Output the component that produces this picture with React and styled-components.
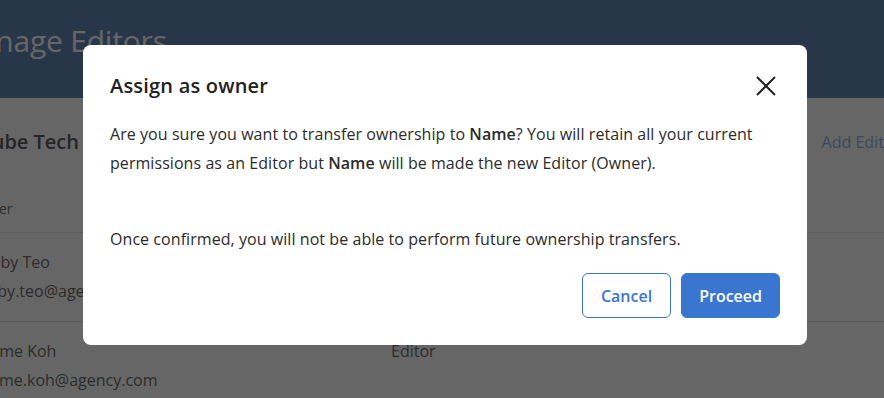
import React from 'react';
import styled, {createGlobalStyle} from 'styled-components';

const GlobalStyle = createGlobalStyle`
  html, body {
    margin: 0;
    height: 100%;
    overflow: hidden;
    background: #ffffff;
    font-family: "Open Sans", "DejaVu Sans", sans-serif;
  }
  #root {
    height: 100%;
  }
`

// the page behind the dialog (scrolled a little to the right)
const Page = styled.div`
  margin-left: -48px;
  width: calc(100% + 96px);
  height: 100%;
`

const PageHeader = styled.header`
  height: 98px;
  box-sizing: border-box;
  padding: 21px 0 0 0;
  background-color: #6487b6;

  h1 {
    margin: 0;
    font-size: 30px;
    line-height: 40px;
    font-weight: 400;
    letter-spacing: -0.2px;
    color: #ffffff;
  }
`

const Section = styled.section`
  padding: 30px 32px 0 30px;
`

const SectionTop = styled.div`
  display: flex;
  justify-content: space-between;
  align-items: center;

  h2 {
    margin: 0 0 0 -3px;
    font-size: 20px;
    line-height: 28px;
    font-weight: 600;
    color: #5c5c5c;
  }
`

const LinkButton = styled.button`
  border: none;
  background: none;
  padding: 0;
  font-family: inherit;
  font-size: 16px;
  line-height: 28px;
  color: #94b8ee;
`

const ColumnHead = styled.div`
  margin-top: 43px;
  padding-bottom: 13px;
  font-size: 14px;
  line-height: 20px;
  color: #767676;
  border-bottom: 1px solid #e4e4e4;
`

const Row = styled.div`
  display: grid;
  grid-template-columns: 409px 1fr;
  padding: 15px 0;
  border-bottom: 1px solid #e4e4e4;
  font-size: 16px;
  line-height: 29px;
  color: #6e6e6e;
`

const Person = styled.div`
  display: flex;
  flex-direction: column;
`

const Overlay = styled.div`
  position: fixed;
  inset: 0;
  background-color: rgba(0, 0, 0, 0.6);
  display: flex;
  align-items: flex-start;
  padding: 45px 0 0 83px;
`

const Modal = styled.div`
  width: 724px;
  box-sizing: border-box;
  padding: 27px;
  background-color: #ffffff;
  border-radius: 8px;
  color: #2b2b2b;
`

const ModalHeader = styled.div`
  display: flex;
  justify-content: space-between;
  align-items: center;

  h3 {
    margin: 0;
    font-size: 20px;
    line-height: 28px;
    font-weight: 600;
    letter-spacing: 0.2px;
    color: #222222;
  }
`

const CloseButton = styled.button`
  width: 28px;
  height: 28px;
  padding: 0;
  border: none;
  background: none;
  display: flex;
  align-items: center;
  justify-content: center;
  color: #222222;
`

const Text = styled.p`
  margin: ${props => props.$top}px 0 0;
  font-size: 16px;
  line-height: 29px;
  letter-spacing: 0.06px;

  b {
    font-weight: 600;
  }
`

const Actions = styled.div`
  display: flex;
  justify-content: flex-end;
  gap: 10px;
  margin-top: 19px;
`

const Button = styled.button`
  height: 45px;
  box-sizing: border-box;
  padding: 0 ${props => props.$primary ? 17 : 18}px;
  border-radius: 6px;
  border: 1px solid #3a76d0;
  background-color: ${props => props.$primary ? '#3a76d0' : '#ffffff'};
  color: ${props => props.$primary ? '#ffffff' : '#3a76d0'};
  font-family: inherit;
  font-size: 16px;
  font-weight: 600;
`

const people = [
    {name: 'Toby Teo', email: 'toby.teo@agency.com', role: 'Editor (Owner)'},
    {name: 'Jaime Koh', email: 'jaime.koh@agency.com', role: 'Editor'},
]

function App() {
    return (
        <>
            <GlobalStyle/>
            <Page>
                <PageHeader>
                    <h1>Manage Editors</h1>
                </PageHeader>
                <Section>
                    <SectionTop>
                        <h2>Cube Tech</h2>
                        <LinkButton>Add Editor</LinkButton>
                    </SectionTop>
                    <ColumnHead>User</ColumnHead>
                    {people.map(p => (
                        <Row key={p.email}>
                            <Person>
                                <span>{p.name}</span>
                                <span>{p.email}</span>
                            </Person>
                            <span>{p.role}</span>
                        </Row>
                    ))}
                </Section>
            </Page>

            <Overlay>
                <Modal role="dialog">
                    <ModalHeader>
                        <h3>Assign as owner</h3>
                        <CloseButton aria-label="Close">
                            <svg width="20" height="20" viewBox="0 0 20 20" fill="none"
                                 stroke="currentColor" strokeWidth="2">
                                <path d="M1 1L19 19M19 1L1 19"/>
                            </svg>
                        </CloseButton>
                    </ModalHeader>
                    <Text $top={20}>
                        Are you sure you want to transfer ownership to <b>Name</b>? You will retain all your current
                        <br/>
                        permissions as an Editor but <b>Name</b> will be made the new Editor (Owner).
                    </Text>
                    <Text $top={47}>
                        Once confirmed, you will not be able to perform future ownership transfers.
                    </Text>
                    <Actions>
                        <Button>Cancel</Button>
                        <Button $primary>Proceed</Button>
                    </Actions>
                </Modal>
            </Overlay>
        </>
    );
}

export default App;
